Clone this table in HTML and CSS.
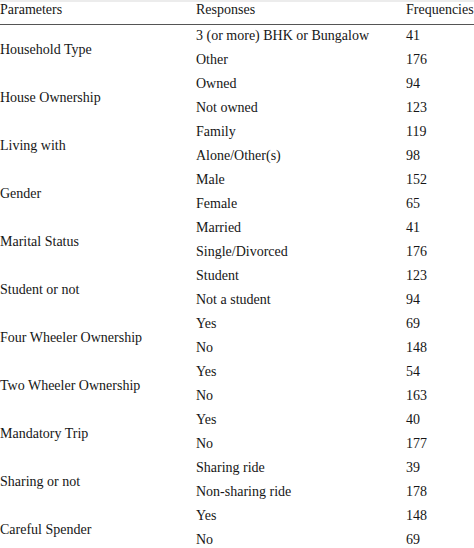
FILE: index.html
```html
<!DOCTYPE html>
<html>
<head>
<meta charset="utf-8">
<link rel="stylesheet" href="styles.css">
</head>
<body>
<table class="freq">
  <colgroup>
    <col class="c1"><col class="c2"><col class="c3">
  </colgroup>
  <thead>
    <tr><th>Parameters</th><th>Responses</th><th>Frequencies</th></tr>
  </thead>
  <tbody>
    <tr><td rowspan="2" class="param">Household Type</td><td>3 (or more) BHK or Bungalow</td><td>41</td></tr>
    <tr><td>Other</td><td>176</td></tr>
    <tr><td rowspan="2" class="param">House Ownership</td><td>Owned</td><td>94</td></tr>
    <tr><td>Not owned</td><td>123</td></tr>
    <tr><td rowspan="2" class="param">Living with</td><td>Family</td><td>119</td></tr>
    <tr><td>Alone/Other(s)</td><td>98</td></tr>
    <tr><td rowspan="2" class="param">Gender</td><td>Male</td><td>152</td></tr>
    <tr><td>Female</td><td>65</td></tr>
    <tr><td rowspan="2" class="param">Marital Status</td><td>Married</td><td>41</td></tr>
    <tr><td>Single/Divorced</td><td>176</td></tr>
    <tr><td rowspan="2" class="param">Student or not</td><td>Student</td><td>123</td></tr>
    <tr><td>Not a student</td><td>94</td></tr>
    <tr><td rowspan="2" class="param">Four Wheeler Ownership</td><td>Yes</td><td>69</td></tr>
    <tr><td>No</td><td>148</td></tr>
    <tr><td rowspan="2" class="param">Two Wheeler Ownership</td><td>Yes</td><td>54</td></tr>
    <tr><td>No</td><td>163</td></tr>
    <tr><td rowspan="2" class="param">Mandatory Trip</td><td>Yes</td><td>40</td></tr>
    <tr><td>No</td><td>177</td></tr>
    <tr><td rowspan="2" class="param">Sharing or not</td><td>Sharing ride</td><td>39</td></tr>
    <tr><td>Non-sharing ride</td><td>178</td></tr>
    <tr><td rowspan="2" class="param">Careful Spender</td><td>Yes</td><td>148</td></tr>
    <tr><td>No</td><td>69</td></tr>
  </tbody>
</table>
</body>
</html>
```
FILE: styles.css
```css
html, body {
  margin: 0;
  padding: 0;
  background: #ffffff;
}
body {
  font-family: "Liberation Serif", "Times New Roman", serif;
  font-size: 14px;
  color: #161616;
  width: 474px;
  height: 548px;
  overflow: hidden;
}
.freq {
  width: 474px;
  table-layout: fixed;
  border-collapse: collapse;
  border-spacing: 0;
}
.c1 { width: 196px; }
.c2 { width: 210px; }
.c3 { width: 68px; }
.freq th {
  font-weight: normal;
  text-align: left;
  padding: 0 0 6px 0;
  height: 16px;
  line-height: 16px;
  vertical-align: top;
  border-top: 2px solid #ececec;
  border-bottom: 1.5px solid #555555;
  white-space: nowrap;
}
.freq td {
  padding: 0 0 3px 0;
  height: 21px;
  line-height: 21px;
  vertical-align: top;
  white-space: nowrap;
}
.freq td.param {
  vertical-align: middle;
  padding: 0;
}
```
